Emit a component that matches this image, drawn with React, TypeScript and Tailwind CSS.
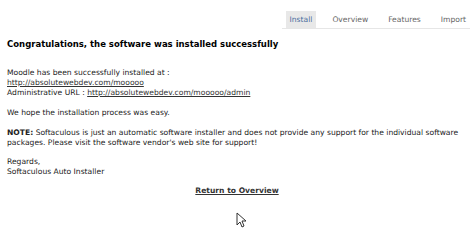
import React from "react";

const tabs = ["Install", "Overview", "Features", "Import"];

export default function App() {
  return (
    <div className="relative h-[232px] w-[474px] overflow-hidden bg-white font-['DejaVu_Sans',sans-serif] text-[#222]">
      {/* Tabs */}
      <div className="flex justify-end pt-[11px] pr-[4px]">
        <div className="flex items-end border-b border-[#e6e6e6] pl-[4px]">
          {tabs.map((t, i) => (
            <div
              key={t}
              className={
                i === 0
                  ? "mr-[12px] bg-[#e8e8e8] px-[4px] py-[3px] text-[7.6px] leading-[11px] text-[#4b6f9f]"
                  : "mr-[12px] px-[4px] py-[3px] text-[7.6px] leading-[11px] text-[#666] last:mr-0"
              }
            >
              {t}
            </div>
          ))}
        </div>
      </div>

      {/* Content */}
      <div className="px-[7px] pt-[9px] text-[7.6px] leading-[10px]">
        <h1 className="text-[8.5px] font-bold leading-[12px] text-black">
          Congratulations, the software was installed successfully
        </h1>

        <div className="mt-[18px]">
          <div>Moodle has been successfully installed at :</div>
          <div>
            <a className="text-[#333] underline">http://absolutewebdev.com/mooooo</a>
          </div>
          <div>
            Administrative URL :{" "}
            <a className="text-[#333] underline">http://absolutewebdev.com/mooooo/admin</a>
          </div>
        </div>

        <div className="mt-[10px]">We hope the installation process was easy.</div>

        <div className="mt-[10px]">
          <b>NOTE:</b> Softaculous is just an automatic software installer and does not provide any support for the individual software
          packages. Please visit the software vendor's web site for support!
        </div>

        <div className="mt-[9px]">
          <div>Regards,</div>
          <div>Softaculous Auto Installer</div>
        </div>

        <div className="mt-[9px] text-center">
          <a className="font-bold text-[#333] underline">Return to Overview</a>
        </div>
      </div>

      {/* Mouse cursor */}
      <svg className="absolute left-[236px] top-[212px]" width="10" height="16" viewBox="0 0 10 16">
        <path d="M1 1 L1 13 L4 10 L6 15 L8 14 L6 9 L10 9 Z" fill="#fff" stroke="#333" strokeWidth="1" strokeLinejoin="round" />
      </svg>
    </div>
  );
}
